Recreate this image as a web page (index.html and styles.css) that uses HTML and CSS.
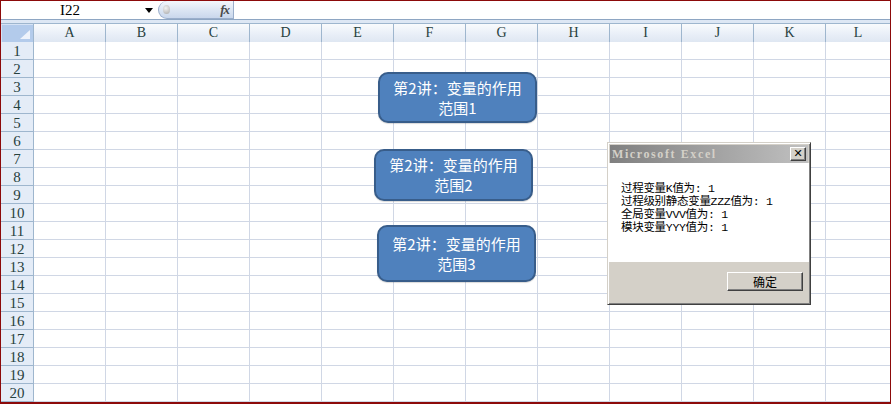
FILE: index.html
```html
<!DOCTYPE html>
<html lang="zh-CN">
<head>
<meta charset="utf-8">
<title>Excel</title>
<link rel="stylesheet" href="styles.css">
</head>
<body>
<div class="window">
  <div class="formula-bar">
    <div class="name-box">I22</div>
    <div class="name-drop"><svg width="8" height="5" viewBox="0 0 8 5"><path d="M0 0H8L4 5Z" fill="#000"/></svg></div>
    <div class="fx-pill">
      <span class="knob"></span>
      <span class="fx">fx</span>
    </div>
    <div class="formula-input"></div>
  </div>
  <div class="band"></div>
  <div class="col-heads">
    <div class="corner"><svg width="10" height="9" viewBox="0 0 10 9"><path d="M10 0V9H0Z" fill="#eef3fb"/></svg></div>
    <div class="col-head">A</div>
    <div class="col-head">B</div>
    <div class="col-head">C</div>
    <div class="col-head">D</div>
    <div class="col-head">E</div>
    <div class="col-head">F</div>
    <div class="col-head">G</div>
    <div class="col-head">H</div>
    <div class="col-head">I</div>
    <div class="col-head">J</div>
    <div class="col-head">K</div>
    <div class="col-head last">L</div>
  </div>
  <div class="sheet">
    <div class="row-heads">
      <div class="row-head">1</div>
      <div class="row-head">2</div>
      <div class="row-head">3</div>
      <div class="row-head">4</div>
      <div class="row-head">5</div>
      <div class="row-head">6</div>
      <div class="row-head">7</div>
      <div class="row-head">8</div>
      <div class="row-head">9</div>
      <div class="row-head">10</div>
      <div class="row-head">11</div>
      <div class="row-head">12</div>
      <div class="row-head">13</div>
      <div class="row-head">14</div>
      <div class="row-head">15</div>
      <div class="row-head">16</div>
      <div class="row-head">17</div>
      <div class="row-head">18</div>
      <div class="row-head">19</div>
      <div class="row-head">20</div>
    </div>
    <div class="cells"></div>
  </div>

  <!-- shapes placed on the worksheet -->
  <div class="shape shape-1">第2讲：变量的作用<br>范围1</div>
  <div class="shape shape-2">第2讲：变量的作用<br>范围2</div>
  <div class="shape shape-3">第2讲：变量的作用<br>范围3</div>

  <!-- message box -->
  <div class="dialog">
    <div class="dlg-title">
      <span class="dlg-caption">Microsoft Excel</span>
      <span class="dlg-close">✕</span>
    </div>
    <div class="dlg-body">
      <div class="dlg-line">过程变量K值为: 1</div>
      <div class="dlg-line">过程级别静态变量ZZZ值为: 1</div>
      <div class="dlg-line">全局变量VVV值为: 1</div>
      <div class="dlg-line">模块变量YYY值为: 1</div>
    </div>
    <div class="dlg-foot">
      <div class="dlg-btn">确定</div>
    </div>
  </div>
</div>
</body>
</html>
```

FILE: styles.css
```css
html, body {
  margin: 0;
  padding: 0;
  background: #fff;
}

.window {
  position: relative;
  width: 889px;
  height: 401px;
  border: 1px solid #8c0a0a;
  border-bottom-width: 2px;
  background: #fff;
  overflow: hidden;
  font-family: "Liberation Serif", "Noto Sans CJK SC", serif;
}

/* formula bar */
.formula-bar {
  display: flex;
  height: 18px;
  border-bottom: 1px solid #8ea6c3;
  background: #fff;
}
.name-box {
  width: 138px;
  text-align: center;
  font-size: 15px;
  line-height: 19px;
  color: #000;
}
.name-drop {
  width: 19px;
  display: flex;
  align-items: center;
  justify-content: center;
  padding-top: 1px;
}
.fx-pill {
  position: relative;
  width: 76px;
  box-sizing: border-box;
  border: 1px solid #9aaecb;
  border-top: 0;
  border-radius: 9px 0 0 9px;
  background: linear-gradient(#f4f7fc, #dbe5f3 55%, #c9d7ec);
  display: flex;
  align-items: center;
}
.knob {
  width: 7px;
  height: 9px;
  margin-left: 4px;
  border-radius: 50%;
  background: radial-gradient(circle at 40% 35%, #f2f2f2, #a9a9a9);
}
.fx {
  margin-left: auto;
  margin-right: 4px;
  font-family: "Liberation Serif", serif;
  font-style: italic;
  font-weight: bold;
  font-size: 13px;
  color: #4a4a4a;
  letter-spacing: -1px;
}
.formula-input {
  flex: 1;
}

.band {
  height: 3px;
  background: #dde7f4;
}

/* column headings */
.col-heads {
  display: grid;
  grid-template-columns: 33px repeat(11, 72px) 1fr;
  height: 17px;
  border-top: 1px solid #9eb6ce;
  border-bottom: 1px solid #9eb6ce;
}
.corner {
  background: #b3cbeb;
  border-right: 1px solid #9eb6ce;
  box-shadow: inset 1px 1px #d6e3f5;
  display: flex;
  align-items: flex-end;
  justify-content: flex-end;
  padding: 0 3px 3px 0;
}
.col-head {
  border-right: 1px solid #9eb6ce;
  background: linear-gradient(#f9fbfd, #e8eef7 60%, #dfe7f2);
  text-align: center;
  font-size: 14px;
  line-height: 18px;
  color: #27413e;
}
.col-head.last {
  border-right: 0;
}

/* rows and cells */
.sheet {
  display: grid;
  grid-template-columns: 33px 1fr;
}
.row-heads {
  display: flex;
  flex-direction: column;
}
.row-head {
  height: 17px;
  border-bottom: 1px solid #9eb6ce;
  border-right: 1px solid #9eb6ce;
  background: #e4ecf7;
  text-align: center;
  font-size: 15px;
  line-height: 18px;
  color: #27413e;
}
.cells {
  background-image:
    linear-gradient(to right, transparent 71px, #d0d7e5 71px),
    linear-gradient(to bottom, transparent 17px, #d0d7e5 17px);
  background-size: 72px 100%, 100% 18px;
}

/* rounded rectangle shapes */
.shape {
  position: absolute;
  width: 159px;
  height: 51px;
  box-sizing: border-box;
  border: 2px solid #385d8a;
  border-radius: 10px;
  background: #4f81bd;
  color: #fff;
  font-family: "Noto Sans CJK SC", sans-serif;
  font-size: 15px;
  line-height: 20px;
  display: flex;
  align-items: center;
  justify-content: center;
  text-align: center;
  box-shadow: 0 1px 1px rgba(0, 0, 0, 0.15);
}
.shape-1 { left: 377px; top: 71px; }
.shape-2 { left: 373px; top: 148px; height: 52px; }
.shape-3 { left: 376px; top: 224px; height: 57px; }

/* message box */
.dialog {
  position: absolute;
  left: 606px;
  top: 141px;
  width: 204px;
  height: 163px;
  box-sizing: border-box;
  border: 1px solid;
  border-color: #d4d0c8 #404040 #404040 #d4d0c8;
  box-shadow: inset 1px 1px #fff, inset -1px -1px #808080;
  background: #d4d0c8;
  padding: 2px 2px 0;
  display: flex;
  flex-direction: column;
}
.dlg-title {
  height: 18px;
  display: flex;
  align-items: center;
  background: linear-gradient(to right, #808080, #c0c0c0);
  padding: 0 2px 0 2px;
}
.dlg-caption {
  font-family: "Liberation Serif", serif;
  font-weight: bold;
  font-size: 12px;
  letter-spacing: 1.6px;
  color: #d4d0c8;
}
.dlg-close {
  margin-left: auto;
  width: 14px;
  height: 12px;
  background: #d4d0c8;
  border: 1px solid;
  border-color: #fff #404040 #404040 #fff;
  box-shadow: inset -1px -1px #808080;
  font-family: "DejaVu Sans", sans-serif;
  font-size: 11px;
  font-weight: bold;
  line-height: 12px;
  text-align: center;
  color: #000;
}
.dlg-body {
  height: 99px;
  margin: 0 -1px 0 -1px;
  background: #fff;
  box-sizing: border-box;
  padding: 19px 0 0 12px;
  color: #000;
}
.dlg-line {
  height: 13px;
  font-family: "Liberation Mono", "Noto Sans CJK SC", monospace;
  font-size: 11.5px;
  line-height: 13px;
  letter-spacing: -0.3px;
}
.dlg-foot {
  flex: 1;
  display: flex;
  justify-content: flex-end;
  align-items: flex-start;
  padding: 10px 5px 0 0;
}
.dlg-btn {
  width: 74px;
  height: 17px;
  background: #d4d0c8;
  border: 1px solid;
  border-color: #fff #404040 #404040 #fff;
  box-shadow: inset -1px -1px #808080;
  text-align: center;
  font-family: "Noto Sans CJK SC", sans-serif;
  font-size: 12px;
  line-height: 17px;
  color: #000;
}
```
